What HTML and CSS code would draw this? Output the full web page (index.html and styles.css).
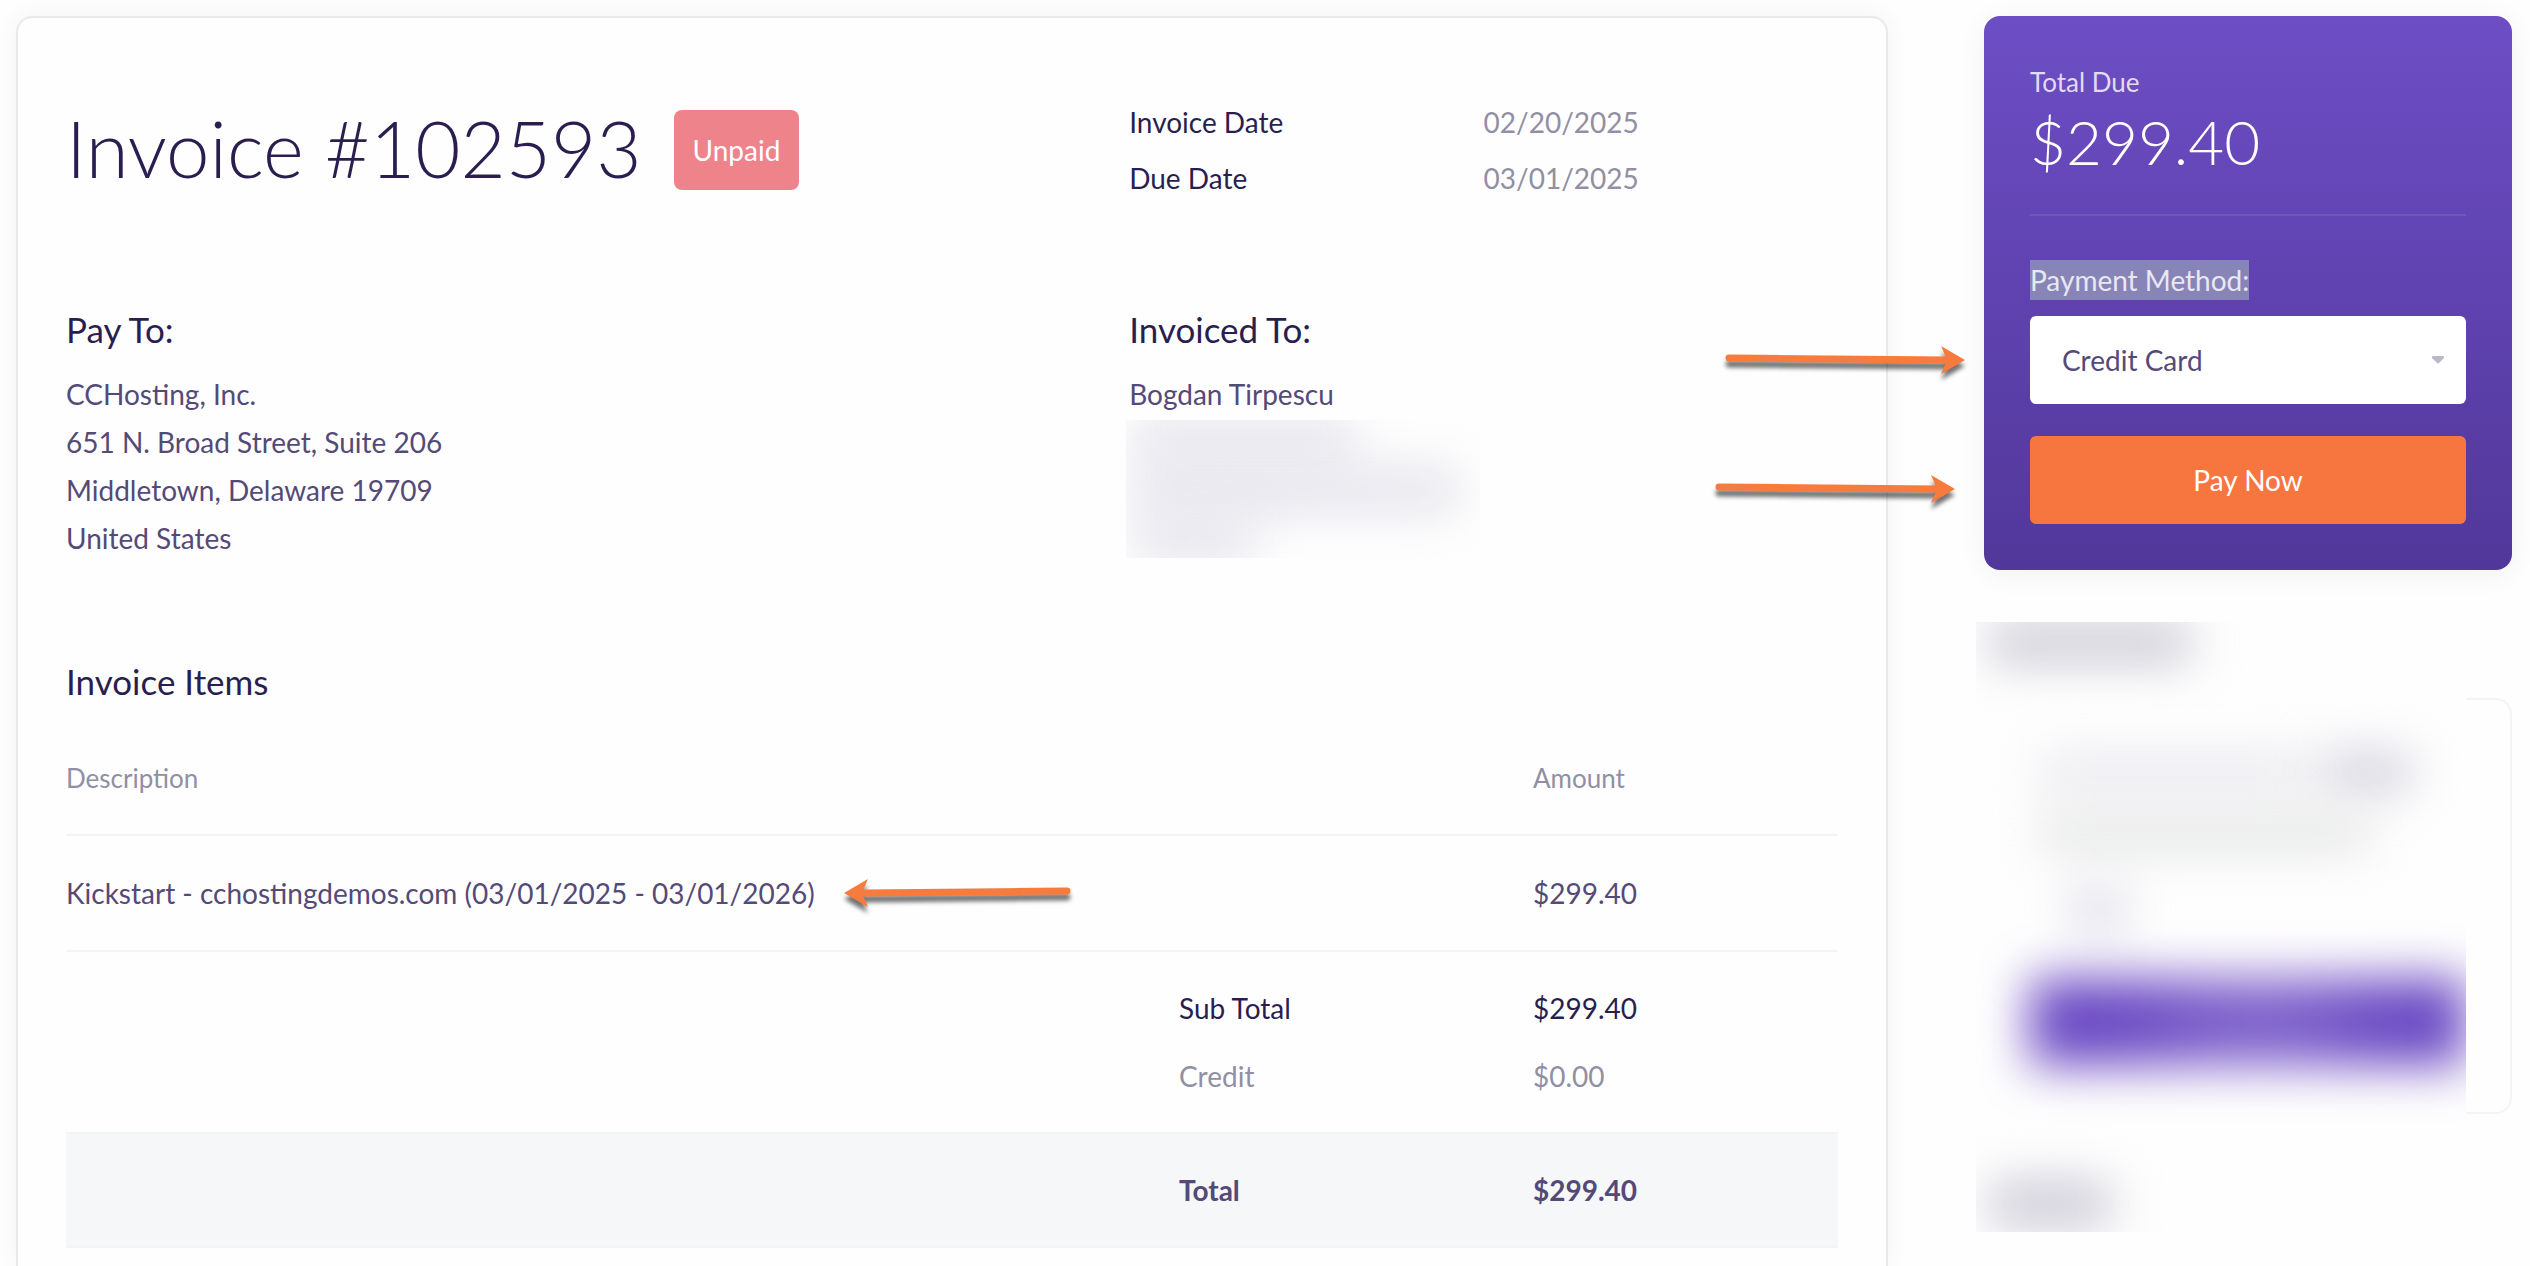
FILE: index.html
```html
<!DOCTYPE html>
<html lang="en">
<head>
<meta charset="utf-8">
<meta name="viewport" content="width=device-width, initial-scale=1">
<title>Invoice #102593</title>
<link rel="stylesheet" href="styles.css">
</head>
<body>
<div class="page">
  <main class="invoice">
    <header class="split invoice-head">
      <div class="title-row">
        <h1 class="title">Invoice #102593</h1>
        <span class="badge">Unpaid</span>
      </div>
      <dl class="dates">
        <dt>Invoice Date</dt><dd>02/20/2025</dd>
        <dt>Due Date</dt><dd>03/01/2025</dd>
      </dl>
    </header>

    <section class="split parties">
      <div>
        <h2 class="heading">Pay To:</h2>
        <address class="address">CCHosting, Inc.<br>651 N. Broad Street, Suite 206<br>Middletown, Delaware 19709<br>United States</address>
      </div>
      <div>
        <h2 class="heading">Invoiced To:</h2>
        <address class="address">Bogdan Tirpescu</address>
        <div class="redacted" aria-hidden="true">
          <span class="smudge smudge-street"></span>
          <span class="smudge smudge-city"></span>
          <span class="smudge smudge-country"></span>
        </div>
      </div>
    </section>

    <section>
      <h2 class="heading">Invoice Items</h2>
      <table class="items">
        <colgroup><col><col class="col-label"><col class="col-amount"></colgroup>
        <thead>
          <tr><th colspan="2" scope="col">Description</th><th scope="col">Amount</th></tr>
        </thead>
        <tbody>
          <tr class="item">
            <td colspan="2">
              <span class="item-name">Kickstart - cchostingdemos.com (03/01/2025 - 03/01/2026)
                <svg class="arrow arrow-item" width="236" height="48" viewBox="0 0 236 48" aria-hidden="true"><path class="arrow-line" d="M25 20L228 18"/><path class="arrow-head" d="M5 20L29 6L23 20L29 34Z"/></svg>
              </span>
            </td>
            <td>$299.40</td>
          </tr>
        </tbody>
        <tfoot>
          <tr class="subtotal"><td></td><th scope="row">Sub Total</th><td>$299.40</td></tr>
          <tr class="credit"><td></td><th scope="row">Credit</th><td>$0.00</td></tr>
          <tr class="total"><td></td><th scope="row">Total</th><td>$299.40</td></tr>
        </tfoot>
      </table>
    </section>
  </main>

  <aside class="sidebar">
    <form class="pay">
      <svg class="arrow arrow-method" width="252" height="48" viewBox="0 0 252 48" aria-hidden="true"><path class="arrow-line" d="M8 18L228 20"/><path class="arrow-head" d="M244 20L220 6L226 20L220 34Z"/></svg>
      <svg class="arrow arrow-submit" width="252" height="48" viewBox="0 0 252 48" aria-hidden="true"><path class="arrow-line" d="M8 18L228 20"/><path class="arrow-head" d="M244 20L220 6L226 20L220 34Z"/></svg>
      <p class="due-label">Total Due</p>
      <p class="due-amount">$299.40</p>
      <label class="method-label" for="method"><span class="selected">Payment Method:</span></label>
      <div class="select-wrap">
        <select class="select" id="method"><option>Credit Card</option></select>
        <svg class="caret" width="12" height="8" viewBox="0 0 12 8" aria-hidden="true"><path d="M1 0H11Q12 0 12 1V2L7 7Q6 8 5 7L0 2V1Q0 0 1 0Z"/></svg>
      </div>
      <button class="submit" type="button">Pay Now</button>
    </form>

    <div class="extras">
      <div class="panel"></div>
      <div class="veil" aria-hidden="true">
        <span class="smudge veil-heading"></span>
        <span class="veil-line"><i class="smudge line-text"></i><i class="smudge line-value"></i></span>
        <span class="smudge veil-text"></span>
        <span class="smudge veil-field"></span>
        <span class="smudge veil-button"></span>
        <span class="smudge veil-footer"></span>
      </div>
    </div>
  </aside>
</div>
</body>
</html>
```
FILE: styles.css
```css
:root {
  --ink: #2a1e50;
  --text: #554a77;
  --muted: #918fa3;
  --line: #f4f4f5;
  --orange: #f7753f;
}

* { box-sizing: border-box; }

body {
  margin: 0;
  background: #fefefe;
  color: var(--text);
  font: 400 28px/48px Lato, "Liberation Sans", sans-serif;
}

h1, h2, p, dl, dd { margin: 0; }

/* Page: invoice sheet and sidebar */
.page {
  display: grid;
  grid-template-columns: minmax(0, 1fr) 528px;
  gap: 96px;
  min-height: 100vh;
  padding: 16px 18px 0 16px;
}

.invoice {
  padding: 76px 48px 0;
  border: 2px solid #e9e9e9;
  border-bottom: 0;
  border-radius: 16px 16px 0 0;
  background: #fefefe;
  box-shadow: 0 0 24px rgba(0, 0, 0, .05);
}

.split {
  display: grid;
  grid-template-columns: minmax(0, 3fr) minmax(0, 2fr);
}

.invoice-head { min-height: 212px; }

.title-row {
  display: flex;
  align-items: flex-start;
  gap: 32px;
}

.title {
  color: var(--ink);
  font-size: 78px;
  font-weight: 300;
  line-height: 108px;
}

.badge {
  margin-top: 16px;
  padding: 16px 19px;
  border-radius: 8px;
  background: #ee838b;
  color: #fff;
}

.dates {
  display: grid;
  grid-template-columns: 50% 50%;
  grid-auto-rows: 56px;
  align-content: start;
  line-height: 56px;
}

.dates dt { color: var(--ink); }
.dates dd { color: var(--muted); }

.heading {
  color: var(--ink);
  font-size: 35px;
  font-weight: 400;
  line-height: 46px;
}

.parties { min-height: 352px; }

.address {
  margin-top: 18px;
  font-style: normal;
}

/* Blurred customer details */
.smudge { display: block; filter: blur(24px); }

.redacted {
  display: flex;
  flex-direction: column;
  gap: 4px;
  width: 354px;
  height: 138px;
  margin: 2px 0 0 -3px;
  padding-left: 8px;
  overflow: hidden;
}

.redacted .smudge { flex: none; height: 44px; background: #e4e3eb; }
.smudge-street { width: 220px; }
.smudge-city { width: 325px; }
.smudge-country { width: 120px; }

/* Invoice items */
.items {
  width: 100%;
  margin-top: 38px;
  border-spacing: 0;
  table-layout: fixed;
}

.col-label { width: 354px; }
.col-amount { width: 305px; }

.items th, .items td {
  padding: 0;
  font-weight: 400;
  text-align: left;
}

.items thead th {
  height: 94px;
  padding-bottom: 20px;
  border-bottom: 2px solid var(--line);
  color: var(--muted);
  font-size: 26px;
}

.items .item td {
  height: 116px;
  border-bottom: 2px solid var(--line);
}

.item-name { position: relative; }

.items .subtotal th, .items .subtotal td { height: 90px; padding-top: 22px; color: var(--ink); }
.items .credit th, .items .credit td { height: 90px; padding-bottom: 22px; color: var(--muted); }

.items .total th, .items .total td {
  height: 116px;
  border-top: 2px solid #f3f5f5;
  border-bottom: 2px solid #f3f5f5;
  background: #f5f7f9;
  font-weight: 700;
}

/* Payment card */
.pay {
  position: relative;
  display: flex;
  flex-direction: column;
  padding: 42px 46px 46px;
  border-radius: 16px;
  background: linear-gradient(#6d4ec5, #52379a);
  box-shadow: 0 4px 28px rgba(0, 0, 0, .06);
}

.due-label {
  color: #e2dbf3;
  font-size: 26px;
}

.due-amount {
  padding-bottom: 38px;
  border-bottom: 2px solid #7156ba;
  color: #fff;
  font-size: 62px;
  font-weight: 300;
  line-height: 70px;
}

.method-label {
  padding: 40px 0 12px;
  color: #e9e7f2;
}

.selected {
  display: inline-block;
  background: #8785b8;
  line-height: 40px;
}

.select-wrap {
  position: relative;
  margin-bottom: 32px;
}

.select {
  display: block;
  width: 100%;
  height: 88px;
  padding: 0 32px;
  appearance: none;
  border: 0;
  border-radius: 6px;
  background: #fff;
  color: var(--text);
  font: inherit;
}

.caret {
  position: absolute;
  top: 40px;
  right: 22px;
  fill: #b9bac9;
}

.submit {
  height: 88px;
  border: 0;
  border-radius: 6px;
  background: var(--orange);
  color: #fff;
  font: inherit;
}

/* Blurred sidebar panels */
.extras {
  position: relative;
  padding-top: 128px;
}

.panel {
  height: 416px;
  border: 2px solid #f4f4f4;
  border-radius: 16px;
}

.veil {
  position: absolute;
  top: 52px;
  left: -8px;
  right: 46px;
  height: 610px;
  overflow: hidden;
  background: #fefefe;
}

.veil-heading { width: 200px; height: 40px; margin: 0 0 0 14px; background: #c8c7d2; }
.veil-line { display: flex; gap: 12px; margin: 92px 0 0 64px; }
.line-text { width: 270px; height: 36px; background: #e9e8ee; }
.line-value { width: 90px; height: 36px; background: #d0ceda; }
.veil-text { width: 330px; height: 36px; margin: 24px 0 0 64px; background: #e3e4e4; }
.veil-field { width: 56px; height: 40px; margin: 40px 0 0 94px; background: #dddbe7; }
.veil-button { height: 88px; margin: 48px 0 0 54px; background: linear-gradient(90deg, #6c4bc4 20%, #7f62cb 45%, #7f62cb 60%, #6c4bc4 82%); }
.veil-footer { width: 120px; height: 44px; margin: 116px 0 0 14px; background: #c9c7d3; }

/* Callout arrows laid over the page */
.arrow {
  position: absolute;
  overflow: visible;
  filter: drop-shadow(0 6px 2px rgba(0, 0, 0, .55));
}

.arrow-line { fill: none; stroke: #f77b3c; stroke-width: 7; stroke-linecap: round; }
.arrow-head { fill: #f77b3c; }
.arrow-item { top: -3px; left: calc(100% + 24px); }
.arrow-method { top: 324px; right: calc(100% + 11px); }
.arrow-submit { top: 453px; right: calc(100% + 21px); }
```
